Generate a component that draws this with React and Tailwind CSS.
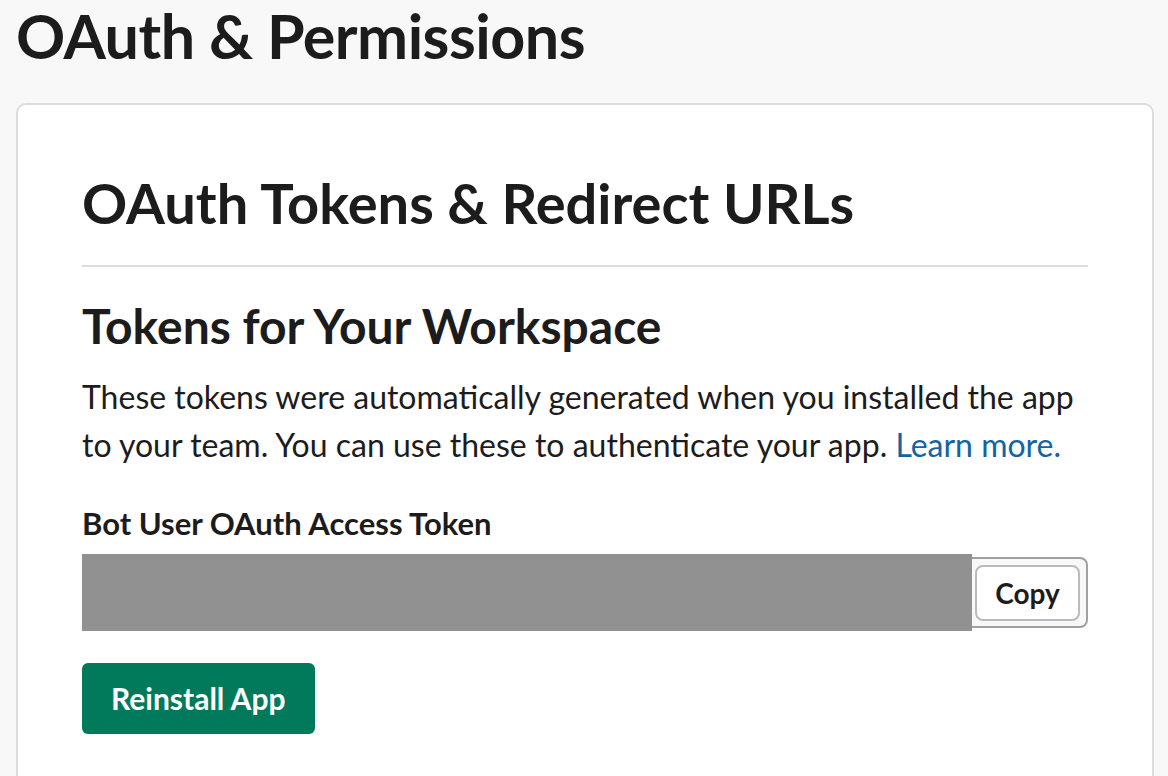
import React from 'react';

const font = { fontFamily: 'Lato, "Noto Sans", sans-serif' };

export default function App() {
    return (
        <div style={font} className="h-[776px] bg-[#f8f8f8] text-[#1d1c1d] overflow-hidden">
            <h1 className="pl-[16px] pt-[2px] text-[61px] leading-[68px] font-bold tracking-[-0.5px]">
                OAuth &amp; Permissions
            </h1>
            <div className="ml-[16px] mr-[14px] mt-[33px] bg-white border-2 border-[#dddddd] rounded-[10px] px-[64px] pt-[62px] pb-[80px]">
                <h2 className="text-[56px] leading-[72px] font-bold">OAuth Tokens &amp; Redirect URLs</h2>
                <div className="mt-[26px] h-[2px] bg-[#dddddd]" />
                <h3 className="mt-[31px] text-[48px] leading-[56px] font-bold">Tokens for Your Workspace</h3>
                <p className="mt-[19px] text-[32px] leading-[48px]">
                    These tokens were automatically generated when you installed the app to your team. You can use these to authenticate your app.{' '}
                    <a className="text-[#1264a3]">Learn more.</a>
                </p>
                <div className="mt-[34px] text-[31px] leading-[40px] font-bold">Bot User OAuth Access Token</div>
                <div className="mt-[11px] flex items-stretch h-[77px]">
                    <div className="w-[890px] bg-[#919191]" />
                    <div className="flex-1 my-[3px] flex items-center border-2 border-l-0 border-[#a0a0a0] rounded-r-[8px] bg-[#f8f8f8] pr-[5px]">
                        <button className="ml-[3px] h-[56px] w-[105px] border-2 border-[#bbbbbb] rounded-[8px] bg-white text-[28px] font-bold">
                            Copy
                        </button>
                    </div>
                </div>
                <button className="mt-[32px] h-[71px] px-[29px] bg-[#007a5a] rounded-[6px] text-white text-[30px] font-bold">
                    Reinstall App
                </button>
            </div>
        </div>
    );
}
